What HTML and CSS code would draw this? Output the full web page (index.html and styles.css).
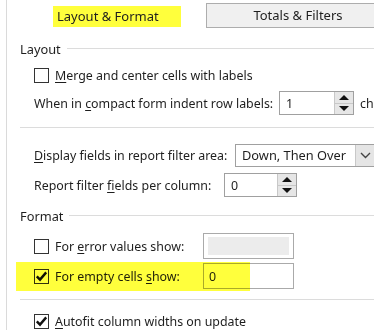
FILE: index.html
```html
<!DOCTYPE html>
<html lang="en">
<head>
    <meta charset="UTF-8">
    <meta name="viewport" content="width=device-width, initial-scale=1.0">
    <title>PivotTable Options</title>
    <link rel="stylesheet" href="styles.css">
</head>
<body>
    <div class="dialog">
        <div class="tabs">
            <div class="tab tab-active">Layout &amp; Format</div>
            <div class="tab">Totals &amp; Filters</div>
        </div>

        <div class="group-head"><span>Layout</span></div>

        <div class="row row-merge">
            <span class="check"></span>
            <span class="label"><u>M</u>erge and center cells with labels</span>
        </div>

        <div class="row row-compact">
            <span class="label label-compact">When in <u>c</u>ompact form indent row labels:</span>
            <div class="spin spin-indent">
                <span class="spin-value">1</span>
                <div class="spin-buttons">
                    <span class="arrow-up"></span>
                    <span class="arrow-down"></span>
                </div>
            </div>
            <span class="label suffix">characters</span>
        </div>

        <div class="separator sep-layout"></div>

        <div class="row row-display">
            <span class="label label-display"><u>D</u>isplay fields in report filter area:</span>
            <div class="select">
                <span class="select-value">Down, Then Over</span>
                <span class="select-button">
                    <svg width="11" height="7" viewBox="0 0 11 7"><path d="M1 1 L5.5 5.5 L10 1" fill="none" stroke="#444" stroke-width="1.4"/></svg>
                </span>
            </div>
        </div>

        <div class="row row-report">
            <span class="label label-report">Report filter <u>f</u>ields per column:</span>
            <div class="spin spin-report">
                <span class="spin-value">0</span>
                <div class="spin-buttons">
                    <span class="arrow-up"></span>
                    <span class="arrow-down"></span>
                </div>
            </div>
        </div>

        <div class="group-head head-format"><span>Format</span></div>

        <div class="row row-error">
            <span class="check"></span>
            <span class="label label-fixed">For <u>e</u>rror values show:</span>
            <div class="textbox textbox-disabled"><span class="textbox-fill"></span></div>
        </div>

        <div class="row row-empty">
            <span class="check checked">
                <svg width="13" height="13" viewBox="0 0 13 13"><path d="M1.8 6.3 L5 9.6 L11.2 2.4" fill="none" stroke="#111" stroke-width="2.4"/></svg>
            </span>
            <span class="label label-fixed">For empty cells <u>s</u>how:</span>
            <div class="textbox"><span class="textbox-value">0</span></div>
            <span class="highlight"></span>
        </div>

        <div class="separator sep-format"></div>

        <div class="row row-autofit">
            <span class="check checked">
                <svg width="13" height="13" viewBox="0 0 13 13"><path d="M1.8 6.3 L5 9.6 L11.2 2.4" fill="none" stroke="#111" stroke-width="2.4"/></svg>
            </span>
            <span class="label"><u>A</u>utofit column widths on update</span>
        </div>
    </div>
</body>
</html>
```

FILE: styles.css
```css
body {
    margin: 0;
    padding: 0;
    background-color: #fff;
    font-family: 'Noto Sans', 'Open Sans', sans-serif;
    font-size: 12.4px;
    color: #1e1e1e;
    width: 374px;
    height: 330px;
    overflow: hidden;
}

.dialog {
    margin-left: 6px;
    width: 420px;
    height: 330px;
    border-left: 1px solid #dadada;
}

/* Tab strip */
.tabs {
    display: flex;
    align-items: flex-start;
    height: 38px;
}

.tab {
    box-sizing: border-box;
    white-space: nowrap;
}

.tab-active {
    margin-left: 46px;
    margin-top: 6px;
    width: 128px;
    height: 21px;
    padding-left: 4px;
    line-height: 21px;
    font-size: 13px;
    background-color: #ffff3c;
}

.tab:not(.tab-active) {
    margin-left: 25px;
    margin-top: 3px;
    width: 184px;
    height: 25px;
    line-height: 23px;
    text-align: center;
    font-size: 13px;
    background-color: #f0f0f0;
    border: 1px solid #adadad;
}

/* Group headings with a rule after the text */
.group-head {
    display: flex;
    align-items: center;
    height: 22px;
    padding-left: 13px;
    font-size: 12.8px;
}

.group-head::after {
    content: "";
    flex: 1;
    margin-left: 6px;
    margin-top: -1px;
    border-top: 1px solid #dcdcdc;
}

.head-format {
    height: 34px;
}

.row {
    position: relative;
    display: flex;
    align-items: center;
    padding-left: 27px;
    white-space: nowrap;
}

.label u {
    text-decoration-thickness: 1px;
    text-underline-offset: 2px;
}

.row-merge { height: 30px; }
.row-compact { height: 26px; }
.row-display { height: 32px; }
.row-report { height: 28px; }
.row-error { height: 26px; }
.row-empty { height: 34px; }
.row-autofit { height: 26px; }

.separator {
    margin-left: 13px;
    border-top: 1px solid #dcdcdc;
}

.sep-layout {
    height: 11px;
    margin-top: 11px;
}

.sep-format {
    height: 8px;
    margin-top: 6px;
}

/* Checkboxes */
.check {
    box-sizing: border-box;
    width: 15px;
    height: 15px;
    margin-right: 6px;
    border: 1px solid #333;
    background-color: #fff;
    display: flex;
    align-items: center;
    justify-content: center;
}

/* Fixed label widths so the controls line up */
.label-compact { width: 245px; }
.label-display { width: 201px; }
.label-report { width: 190px; }
.label-fixed { width: 148px; }

/* Spinners */
.spin {
    box-sizing: border-box;
    display: flex;
    justify-content: space-between;
    align-items: center;
    border: 1px solid #a0a0a0;
    background-color: #fff;
}

.spin-indent {
    width: 75px;
    height: 24px;
}

.spin-report {
    width: 73px;
    height: 24px;
}

.spin-value {
    padding-left: 6px;
}

.spin-buttons {
    box-sizing: border-box;
    display: flex;
    flex-direction: column;
    width: 19px;
    height: 22px;
    border-left: 1px solid #c8c8c8;
    background-color: #e6e6e6;
}

.arrow-up,
.arrow-down {
    flex: 1;
    display: flex;
    align-items: center;
    justify-content: center;
}

.arrow-up {
    border-bottom: 1px solid #c8c8c8;
}

.arrow-up::before {
    content: "";
    border-left: 5px solid transparent;
    border-right: 5px solid transparent;
    border-bottom: 5px solid #111;
}

.arrow-down::before {
    content: "";
    border-left: 5px solid transparent;
    border-right: 5px solid transparent;
    border-top: 5px solid #111;
}

.suffix {
    margin-left: 6px;
}

/* Dropdown */
.select {
    box-sizing: border-box;
    display: flex;
    align-items: center;
    justify-content: space-between;
    width: 140px;
    height: 23px;
    border: 1px solid #a0a0a0;
}

.select-value {
    padding-left: 6px;
    font-size: 12.8px;
}

.select-button {
    width: 18px;
    height: 21px;
    display: flex;
    align-items: center;
    justify-content: center;
    background-color: #e5e5e5;
    border-left: 1px solid #c8c8c8;
}

/* Text boxes */
.textbox {
    box-sizing: border-box;
    width: 91px;
    height: 26px;
    border: 1px solid #aaa;
    display: flex;
    align-items: center;
}

.textbox-disabled {
    padding: 3px 4px;
}

.textbox-fill {
    flex: 1;
    align-self: stretch;
    background-color: #ececec;
}

.textbox-value {
    padding-left: 5px;
}

/* Yellow marker over the empty cells row */
.highlight {
    position: absolute;
    left: 9px;
    top: 3px;
    width: 234px;
    height: 29px;
    background-color: #ffff3c;
    mix-blend-mode: multiply;
    pointer-events: none;
}
```
